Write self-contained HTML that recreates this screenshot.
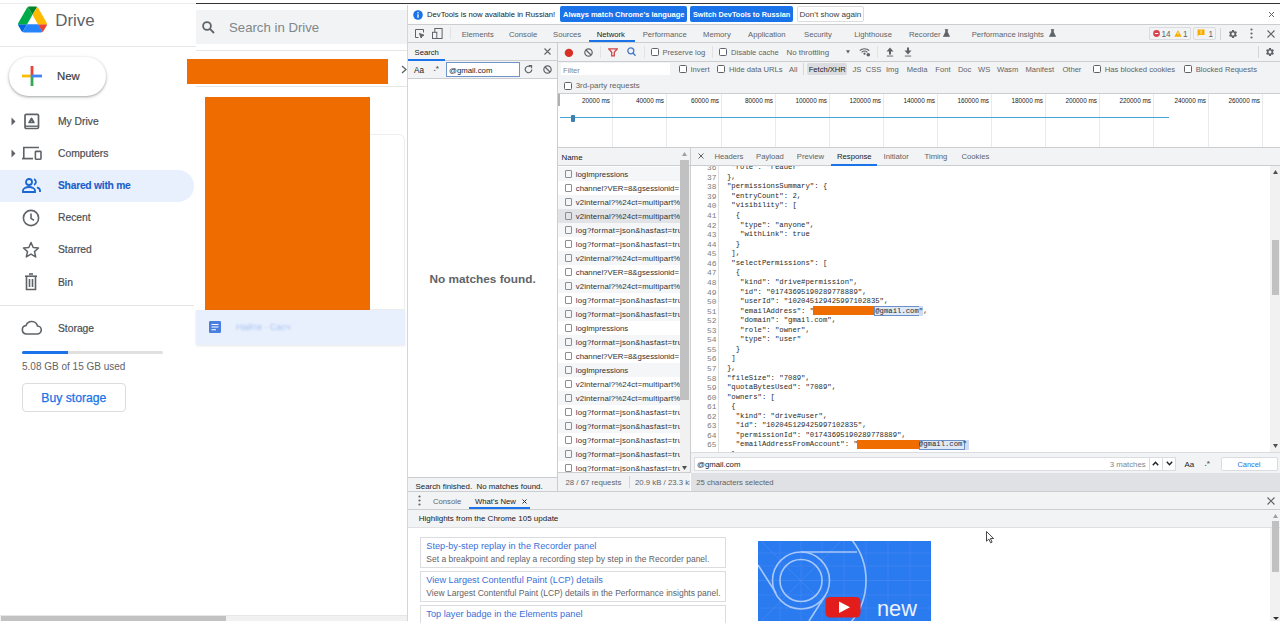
<!DOCTYPE html>
<html><head><meta charset="utf-8">
<style>
*{box-sizing:border-box}
html,body{margin:0;padding:0}
body{width:1280px;height:623px;position:relative;overflow:hidden;background:#fff;font-family:"Liberation Sans",sans-serif;color:#202124}
.a{position:absolute}
.t{position:absolute;white-space:pre;line-height:1}
.dt{font-size:7.7px;color:#5f6368}
.mono{font-family:"Liberation Mono",monospace}
</style></head><body>

<!-- ============ DRIVE SIDEBAR ============ -->
<div class="a" style="left:0;top:3px;width:196px;height:1px;background:#ececec"></div>
<svg class="a" style="left:18px;top:6px" width="29" height="27" viewBox="0 0 87.3 78">
<path d="m6.6 66.85 3.85 6.65c.8 1.4 1.95 2.5 3.3 3.3l13.75-23.8h-27.5c0 1.55.4 3.1 1.2 4.5z" fill="#0066da"/>
<path d="m43.65 25-13.75-23.8c-1.35.8-2.5 1.9-3.3 3.3l-25.4 44a9.06 9.06 0 0 0 -1.2 4.5h27.5z" fill="#00ac47"/>
<path d="m73.55 76.8c1.35-.8 2.5-1.9 3.3-3.3l1.6-2.75 7.65-13.25c.8-1.4 1.2-2.95 1.2-4.5h-27.502l5.852 11.5z" fill="#ea4335"/>
<path d="m43.65 25 13.75-23.8c-1.35-.8-2.9-1.2-4.5-1.2h-18.5c-1.6 0-3.15.45-4.5 1.2z" fill="#00832d"/>
<path d="m59.8 53h-32.3l-13.75 23.8c1.35.8 2.9 1.2 4.5 1.2h50.8c1.6 0 3.15-.45 4.5-1.2z" fill="#2684fc"/>
<path d="m73.4 26.5-12.7-22c-.8-1.4-1.95-2.5-3.3-3.3l-13.75 23.8 16.15 28h27.45c0-1.55-.4-3.1-1.2-4.5z" fill="#ffba00"/>
</svg>
<div class="t" style="left:55.3px;top:12.5px;font-size:16.9px;color:#5f6368">Drive</div>
<div class="a" style="left:0;top:46px;width:196px;height:1px;background:#e6e6e6"></div>

<!-- New button -->
<div class="a" style="left:9px;top:57px;width:97px;height:39px;border-radius:20px;background:#fff;box-shadow:0 1px 2px rgba(60,64,67,.30),0 1px 3px 1px rgba(60,64,67,.15)"></div>
<svg class="a" style="left:22px;top:66px" width="20" height="20" viewBox="0 0 20 20">
<rect x="8.6" y="0" width="2.8" height="9" fill="#ea4335"/>
<rect x="11" y="8.6" width="9" height="2.8" fill="#4285f4"/>
<rect x="8.6" y="11" width="2.8" height="9" fill="#34a853"/>
<rect x="0" y="8.6" width="9" height="2.8" fill="#fbbc04"/>
<rect x="8.6" y="8.6" width="2.8" height="2.8" fill="#4285f4"/>
</svg>
<div class="t" style="left:57px;top:71.3px;font-size:11.4px;color:#3c4043;-webkit-text-stroke:0.2px #3c4043">New</div>

<!-- nav -->
<div class="a" style="left:0;top:170px;width:194px;height:32px;background:#e8f0fe;border-radius:0 16px 16px 0"></div>

<svg class="a" style="left:11px;top:117px" width="5" height="9" viewBox="0 0 5 9"><path d="M0.5 0.5 L4.5 4.5 L0.5 8.5Z" fill="#5f6368"/></svg>
<svg class="a" style="left:23px;top:113px" width="17" height="17" viewBox="0 0 17 17" fill="none" stroke="#5f6368" stroke-width="1.7"><rect x="2" y="1.3" width="13.5" height="14.2" rx="1.3"/><path d="M2 13.2h13.5" stroke-width="1.4"/><path d="M8.5 5.6L6.2 9.4H10.8Z" stroke-width="1.9" stroke-linejoin="round"/></svg>
<div class="t" style="left:58px;top:117.2px;font-size:10.3px;color:#4a4e52;-webkit-text-stroke:0.2px #4a4e52">My Drive</div>

<svg class="a" style="left:11px;top:149px" width="5" height="9" viewBox="0 0 5 9"><path d="M0.5 0.5 L4.5 4.5 L0.5 8.5Z" fill="#5f6368"/></svg>
<svg class="a" style="left:21px;top:146px" width="21" height="16" viewBox="0 0 21 16" fill="none" stroke="#5f6368" stroke-width="1.6"><path d="M2.8 12.2V1.5H18"/><path d="M1 12.6h11" stroke-width="1.7"/><rect x="14.4" y="5.4" width="5.6" height="7.8" rx="0.6"/></svg>
<div class="t" style="left:58px;top:149.2px;font-size:10.3px;color:#4a4e52;-webkit-text-stroke:0.2px #4a4e52">Computers</div>

<svg class="a" style="left:22px;top:178px" width="19" height="15" viewBox="0 0 19 15" fill="none" stroke="#1967d2" stroke-width="1.8"><circle cx="7" cy="4" r="3"/><path d="M1 14v-1.5c0-2 3-3.5 6-3.5s6 1.5 6 3.5V14z"/><path d="M12 1.2a3 3 0 0 1 0 5.6"/><path d="M15 9.3c1.8.6 3 1.6 3 3.2V14"/></svg>
<div class="t" style="left:58px;top:181.2px;font-size:10.3px;font-weight:bold;letter-spacing:-0.25px;color:#1c5ec8;-webkit-text-stroke:0.1px #1c5ec8">Shared with me</div>

<svg class="a" style="left:22px;top:209px" width="18" height="18" viewBox="0 0 18 18" fill="none" stroke="#5f6368" stroke-width="1.6"><circle cx="9" cy="9" r="7.6"/><path d="M9 4.5V9.3l3 2"/></svg>
<div class="t" style="left:58px;top:213.2px;font-size:10.3px;color:#4a4e52;-webkit-text-stroke:0.2px #4a4e52">Recent</div>

<svg class="a" style="left:22px;top:241px" width="18" height="18" viewBox="0 0 18 18" fill="none" stroke="#5f6368" stroke-width="1.5" stroke-linejoin="round"><path d="M9 1.5l2.2 5 5.3.5-4 3.6 1.2 5.3L9 13.1l-4.7 2.8 1.2-5.3-4-3.6 5.3-.5z"/></svg>
<div class="t" style="left:58px;top:245.2px;font-size:10.3px;color:#4a4e52;-webkit-text-stroke:0.2px #4a4e52">Starred</div>

<svg class="a" style="left:24px;top:273px" width="14" height="18" viewBox="0 0 14 18" fill="none" stroke="#5f6368" stroke-width="1.6"><path d="M1 3.2h12"/><path d="M5 1h4"/><path d="M2.5 3.5v13h9v-13"/><path d="M5.5 6v8M8.5 6v8"/></svg>
<div class="t" style="left:58px;top:278.2px;font-size:10.3px;color:#4a4e52;-webkit-text-stroke:0.2px #4a4e52">Bin</div>

<svg class="a" style="left:21px;top:320px" width="21" height="15" viewBox="0 0 21 15" fill="none" stroke="#5f6368" stroke-width="1.6"><path d="M5 14h11a4 4 0 0 0 .5-8A6 6 0 0 0 5 5.5a4.3 4.3 0 0 0 0 8.5z"/></svg>
<div class="t" style="left:58px;top:324.2px;font-size:10.3px;color:#4a4e52;-webkit-text-stroke:0.2px #4a4e52">Storage</div>
<div class="a" style="left:22px;top:351px;width:141px;height:3px;background:#e0e0e0;border-radius:2px"></div>
<div class="a" style="left:22px;top:351px;width:46px;height:3px;background:#1a73e8;border-radius:2px 0 0 2px"></div>
<div class="t" style="left:22px;top:362.2px;font-size:10px;color:#5f6368">5.08 GB of 15 GB used</div>
<div class="a" style="left:22px;top:383px;width:104px;height:29px;border:1px solid #dadce0;border-radius:4px"></div>
<div class="t" style="left:41.3px;top:392px;font-size:12.2px;color:#1a73e8;-webkit-text-stroke:0.25px #1a73e8">Buy storage</div>


<!-- storage -->
<div class="a" style="left:0;top:305px;width:194px;height:1px;background:#e3e3e3"></div>

<!-- ============ DRIVE MAIN ============ -->
<div class="a" style="left:196px;top:2.6px;width:1084px;height:1.6px;background:#333"></div>
<div class="a" style="left:196px;top:10px;width:211px;height:33.6px;background:#f1f3f4"></div>
<div class="t" style="left:229px;top:21px;font-size:13.2px;color:#80868b">Search in Drive</div>
<div class="a" style="left:196px;top:50px;width:211px;height:1px;background:#e6e6e6"></div>
<div class="a" style="left:187px;top:59px;width:201px;height:25px;background:#ef6c00"></div>
<div class="a" style="left:196px;top:86px;width:211px;height:1px;background:#e6e6e6"></div>
<div class="a" style="left:205px;top:134px;width:200px;height:176px;border:1px solid #eceef0;border-left:none;border-radius:0 6px 0 0"></div>
<div class="a" style="left:205px;top:97px;width:165px;height:213px;background:#ef6c00"></div>
<div class="a" style="left:196px;top:310px;width:209px;height:35px;background:#e9f0fd;box-shadow:0 1px 2px rgba(60,64,67,.12)"></div>

<!-- ============ DEVTOOLS ============ -->

<svg class="a" style="left:202px;top:21px" width="13" height="13" viewBox="0 0 13 13" fill="none" stroke="#5f6368" stroke-width="1.8"><circle cx="5" cy="5" r="3.9"/><path d="M7.9 7.9L12 12"/></svg>
<svg class="a" style="left:401px;top:65px" width="6" height="9" viewBox="0 0 6 9" fill="none" stroke="#5f6368" stroke-width="1.3"><path d="M1 1L5 4.5 1 8"/></svg>
<svg class="a" style="left:209px;top:321px" width="12" height="12" viewBox="0 0 12 12"><rect x="0" y="0" width="12" height="12" rx="1.2" fill="#4a7fe0"/><path d="M2.5 3.5h7M2.5 6h7M2.5 8.8h4.5" stroke="#fff" stroke-width="1.1"/></svg>
<div class="t" style="left:236px;top:323px;font-size:9px;color:#a8c3f0;filter:blur(1.3px)">Найти · Сасч</div>
<div class="a" style="left:0;top:615px;width:407px;height:6px;background:#f1f1f1;border-top:1px solid #e6e6e6"></div>
<div class="a" style="left:1px;top:616px;width:225px;height:5px;background:#c2c2c2"></div>
<div class="a" style="left:407px;top:5px;width:1px;height:616px;background:#d3d5d8;"></div>
<div class="a" style="left:408px;top:5px;width:872px;height:19px;background:#fff;"></div>
<div class="a" style="left:408px;top:24px;width:872px;height:1px;background:#cbcdd1;"></div>
<svg class="a" style="left:413px;top:10px" width="10" height="10" viewBox="0 0 10 10"><circle cx="5" cy="5" r="4.8" fill="#1a73e8"/><rect x="4.35" y="4.2" width="1.3" height="3.6" fill="#fff"/><rect x="4.35" y="2.1" width="1.3" height="1.3" fill="#fff"/></svg>
<div class="t" style="left:427px;top:11.30px;font-size:7.7px;color:#202124;">DevTools is now available in Russian!</div>
<div class="a" style="left:560px;top:6px;width:127px;height:16px;background:#1a73e8;border-radius:2px"></div>
<div class="t" style="left:563px;top:10.80px;font-size:7.5px;color:#fff;font-weight:bold">Always match Chrome's language</div>
<div class="a" style="left:690px;top:6px;width:103px;height:16px;background:#1a73e8;border-radius:2px"></div>
<div class="t" style="left:693px;top:10.80px;font-size:7.3px;color:#fff;font-weight:bold">Switch DevTools to Russian</div>
<div class="a" style="left:797px;top:6px;width:67px;height:16px;background:#fff;border:1px solid #dadce0;border-radius:2px"></div>
<div class="t" style="left:799.5px;top:10.80px;font-size:8.1px;color:#3c4043;">Don't show again</div>
<svg class="a" style="left:1268px;top:11px" width="7" height="7" viewBox="0 0 7 7" stroke="#5f6368" stroke-width="1"><path d="M1 1L6 6M6 1L1 6"/></svg>
<div class="a" style="left:408px;top:25px;width:872px;height:17px;background:#f1f3f4;"></div>
<div class="a" style="left:408px;top:42px;width:872px;height:1px;background:#cbcdd1;"></div>
<svg class="a" style="left:414px;top:28px" width="11" height="11" viewBox="0 0 11 11" fill="none" stroke="#5f6368" stroke-width="1"><path d="M4.5 9.5H1.5V1.5H9.5V4.5"/><path d="M5.5 5.5L10 7.2 8 8 7.2 10z" fill="#5f6368"/></svg>
<svg class="a" style="left:432px;top:28px" width="11" height="11" viewBox="0 0 11 11" fill="none" stroke="#5f6368" stroke-width="1"><rect x="2.8" y="0.5" width="7.3" height="10"/><rect x="0.5" y="4.3" width="4.3" height="6.2" fill="#f1f3f4"/></svg>
<div class="a" style="left:450px;top:27px;width:1px;height:12px;background:#e0e2e5;"></div>
<div class="t" style="left:461.7px;top:30.80px;font-size:7.7px;color:#5f6368;">Elements</div>
<div class="t" style="left:509px;top:30.80px;font-size:7.7px;color:#5f6368;">Console</div>
<div class="t" style="left:553px;top:30.80px;font-size:7.7px;color:#5f6368;">Sources</div>
<div class="t" style="left:596.7px;top:30.80px;font-size:7.7px;color:#202124;">Network</div>
<div class="t" style="left:642.7px;top:30.80px;font-size:7.7px;color:#5f6368;">Performance</div>
<div class="t" style="left:703px;top:30.80px;font-size:7.7px;color:#5f6368;">Memory</div>
<div class="t" style="left:748px;top:30.80px;font-size:7.7px;color:#5f6368;">Application</div>
<div class="t" style="left:804px;top:30.80px;font-size:7.7px;color:#5f6368;">Security</div>
<div class="t" style="left:854.3px;top:30.80px;font-size:7.7px;color:#5f6368;">Lighthouse</div>
<div class="t" style="left:909px;top:30.80px;font-size:7.7px;color:#5f6368;">Recorder</div>
<div class="t" style="left:971.7px;top:30.80px;font-size:7.7px;color:#5f6368;">Performance insights</div>
<div class="a" style="left:589px;top:40px;width:46px;height:2px;background:#1a73e8;"></div>
<svg class="a" style="left:943px;top:29px" width="7" height="8" viewBox="0 0 7 8"><path d="M1.8 0.4h3.4M2.6 0.4v2.6L0.4 7.6h6.2L4.4 3V0.4" fill="#5f6368" stroke="#5f6368" stroke-width="0.7"/></svg>
<svg class="a" style="left:1049px;top:29px" width="7" height="8" viewBox="0 0 7 8"><path d="M1.8 0.4h3.4M2.6 0.4v2.6L0.4 7.6h6.2L4.4 3V0.4" fill="#5f6368" stroke="#5f6368" stroke-width="0.7"/></svg>
<div class="a" style="left:1148.5px;top:27px;width:42px;height:13px;background:#f1f3f4;border:1px solid #dadce0;border-radius:1px"></div>
<svg class="a" style="left:1153px;top:30px" width="7" height="7" viewBox="0 0 7 7"><circle cx="3.5" cy="3.5" r="3.4" fill="#d8454f"/><path d="M1.8 3.5H5.2" stroke="#fff" stroke-width="1"/></svg>
<div class="t" style="left:1161.5px;top:30.80px;font-size:8.2px;color:#5f6368;">14</div>
<svg class="a" style="left:1173.5px;top:29.5px" width="8" height="7" viewBox="0 0 8 7"><path d="M4 0.3L7.7 6.7H0.3z" fill="#f9ab00"/><rect x="3.6" y="2.3" width="0.8" height="2.3" fill="#fff"/></svg>
<div class="t" style="left:1183px;top:30.80px;font-size:8.2px;color:#5f6368;">1</div>
<div class="a" style="left:1193px;top:27px;width:23px;height:13px;background:#f1f3f4;border:1px solid #dadce0;border-radius:2px"></div>
<svg class="a" style="left:1197px;top:29px" width="8" height="8" viewBox="0 0 8 8"><path d="M0.5 0.5h7v5.5H2L0.5 7.5z" fill="#f9ab00"/><rect x="3.6" y="1.5" width="0.9" height="2.3" fill="#fff"/><rect x="3.6" y="4.3" width="0.9" height="0.9" fill="#fff"/></svg>
<div class="t" style="left:1208.5px;top:30.80px;font-size:8.2px;color:#5f6368;">1</div>
<div class="a" style="left:1220px;top:28px;width:1px;height:12px;background:#d4d6d9;"></div>
<svg class="a" style="left:1227.5px;top:28.5px" width="10" height="10" viewBox="0 0 24 24"><path fill="#5f6368" d="M19.14 12.94c.04-.3.06-.61.06-.94 0-.32-.02-.64-.07-.94l2.03-1.58c.18-.14.23-.41.12-.61l-1.92-3.32c-.12-.22-.37-.29-.59-.22l-2.39.96c-.5-.38-1.03-.7-1.62-.94l-.36-2.54c-.04-.24-.24-.41-.48-.41h-3.84c-.24 0-.43.17-.47.41l-.36 2.54c-.59.24-1.13.57-1.62.94l-2.39-.96c-.22-.08-.47 0-.59.22L2.74 8.87c-.12.21-.08.47.12.61l2.03 1.58c-.05.3-.09.63-.09.94s.02.64.07.94l-2.03 1.58c-.18.14-.23.41-.12.61l1.92 3.32c.12.22.37.29.59.22l2.39-.96c.5.38 1.03.7 1.62.94l.36 2.54c.05.24.24.41.48.41h3.84c.24 0 .44-.17.47-.41l.36-2.54c.59-.24 1.13-.56 1.62-.94l2.39.96c.22.08.47 0 .59-.22l1.92-3.32c.12-.22.07-.47-.12-.61l-2.01-1.58zM12 15.6c-1.98 0-3.6-1.62-3.6-3.6s1.62-3.6 3.6-3.6 3.6 1.62 3.6 3.6-1.62 3.6-3.6 3.6z"/></svg>
<svg class="a" style="left:1250px;top:28px" width="3" height="11" viewBox="0 0 3 11" fill="#5f6368"><circle cx="1.5" cy="1.5" r="1.1"/><circle cx="1.5" cy="5.5" r="1.1"/><circle cx="1.5" cy="9.5" r="1.1"/></svg>
<svg class="a" style="left:1266.5px;top:30px" width="8" height="8" viewBox="0 0 8 8" stroke="#5f6368" stroke-width="1.1"><path d="M0.5 0.5L7.5 7.5M7.5 0.5L0.5 7.5"/></svg>
<div class="a" style="left:408px;top:43px;width:149px;height:17px;background:#f1f3f4;"></div>
<div class="a" style="left:408px;top:60px;width:149px;height:1px;background:#cbcdd1;"></div>
<div class="t" style="left:414.5px;top:49.30px;font-size:7.7px;color:#202124;">Search</div>
<div class="a" style="left:408px;top:59px;width:37px;height:2px;background:#1a73e8;"></div>
<svg class="a" style="left:543.5px;top:48px" width="7" height="7" viewBox="0 0 7 7" stroke="#5f6368" stroke-width="1.1"><path d="M0.5 0.5L6.5 6.5M6.5 0.5L0.5 6.5"/></svg>
<div class="a" style="left:408px;top:61px;width:149px;height:17px;background:#f1f3f4;"></div>
<div class="a" style="left:408px;top:78px;width:149px;height:1px;background:#cbcdd1;"></div>
<div class="t" style="left:414px;top:67.30px;font-size:8.2px;color:#202124;">Aa</div>
<div class="t" style="left:433.5px;top:64.80px;font-size:8px;color:#5f6368;font-weight:bold">.*</div>
<div class="a" style="left:446px;top:62px;width:74px;height:15px;background:#fff;border:1px solid #6f94cc"></div>
<div class="t" style="left:449px;top:66.80px;font-size:7.8px;color:#202124;">@gmail.com</div>
<svg class="a" style="left:524px;top:65px" width="9" height="9" viewBox="0 0 9 9" fill="none" stroke="#5f6368" stroke-width="1.2"><path d="M7.8 4.5A3.3 3.3 0 1 1 6.5 1.8"/><path d="M5 0.6h2.6v2.6" stroke-width="1.1"/></svg>
<svg class="a" style="left:542.5px;top:65px" width="9" height="9" viewBox="0 0 9 9" fill="none" stroke="#5f6368" stroke-width="1.2"><circle cx="4.5" cy="4.5" r="3.7"/><path d="M2 2L7 7"/></svg>
<div class="t" style="left:429.5px;top:274.30px;font-size:11.8px;color:#5f6368;font-weight:bold">No matches found.</div>
<div class="a" style="left:408px;top:477px;width:149px;height:1px;background:#cbcdd1;"></div>
<div class="a" style="left:408px;top:478px;width:149px;height:13px;background:#f1f3f4;"></div>
<div class="t" style="left:415.5px;top:482.80px;font-size:7.9px;color:#202124;">Search finished.  No matches found.</div>
<div class="a" style="left:557px;top:43px;width:1px;height:448px;background:#cbcdd1;"></div>
<div class="a" style="left:558px;top:43px;width:722px;height:18px;background:#f1f3f4;"></div>
<div class="a" style="left:558px;top:61px;width:722px;height:1px;background:#cbcdd1;"></div>
<svg class="a" style="left:564px;top:47.5px" width="10" height="10" viewBox="0 0 10 10"><circle cx="4.9" cy="4.9" r="4.2" fill="#d93025"/></svg>
<svg class="a" style="left:583.5px;top:47.5px" width="9" height="9" viewBox="0 0 9 9" fill="none" stroke="#5f6368" stroke-width="1.2"><circle cx="4.5" cy="4.5" r="3.7"/><path d="M2 2L7 7"/></svg>
<div class="a" style="left:600px;top:46px;width:1px;height:12px;background:#e0e2e5;"></div>
<svg class="a" style="left:607.5px;top:47.5px" width="10" height="9" viewBox="0 0 10 9" fill="none" stroke="#d0454a" stroke-width="1.3"><path d="M0.8 0.9h8.4L6.3 4.2V7.8H3.7V4.2z"/></svg>
<svg class="a" style="left:626.5px;top:47px" width="9" height="10" viewBox="0 0 9 10" fill="none" stroke="#4a78c6" stroke-width="1.3"><circle cx="3.8" cy="3.8" r="3"/><path d="M6 6L8.5 8.8"/></svg>
<div class="a" style="left:643.5px;top:46px;width:1px;height:12px;background:#e0e2e5;"></div>
<div class="a" style="left:650.5px;top:48px;width:8px;height:8px;border:1px solid #5f6368;border-radius:1.5px;background:#fff"></div>
<div class="t" style="left:662.5px;top:48.80px;font-size:7.6px;color:#5f6368;">Preserve log</div>
<div class="a" style="left:712px;top:46px;width:1px;height:12px;background:#e0e2e5;"></div>
<div class="a" style="left:719px;top:48px;width:8px;height:8px;border:1px solid #5f6368;border-radius:1.5px;background:#fff"></div>
<div class="t" style="left:731px;top:48.80px;font-size:7.6px;color:#5f6368;">Disable cache</div>
<div class="t" style="left:786.5px;top:48.80px;font-size:7.9px;color:#5f6368;">No throttling</div>
<svg class="a" style="left:845.5px;top:50px" width="4" height="4" viewBox="0 0 4 4"><path d="M0 0.3h4L2 3.6z" fill="#5f6368"/></svg>
<svg class="a" style="left:859px;top:47px" width="12" height="10" viewBox="0 0 12 10" fill="none" stroke="#5f6368" stroke-width="1.1"><path d="M0.8 3.5a7 7 0 0 1 9.4 0"/><path d="M2.6 5.3a4.3 4.3 0 0 1 5.8 0"/><circle cx="5.5" cy="6.7" r="0.55" fill="#5f6368"/><circle cx="9.3" cy="7.8" r="1.8" fill="#5f6368" stroke="none"/></svg>
<div class="a" style="left:876.5px;top:46px;width:1px;height:12px;background:#e0e2e5;"></div>
<svg class="a" style="left:885.5px;top:46.5px" width="8" height="10" viewBox="0 0 8 10" fill="#5f6368"><path d="M4 0.5L7.5 4.5H5v3H3v-3H0.5z"/><rect x="0.8" y="8.6" width="6.4" height="0.9"/></svg>
<svg class="a" style="left:904px;top:46.5px" width="8" height="10" viewBox="0 0 8 10" fill="#5f6368"><path d="M4 7.5L7.5 3.5H5v-3H3v3H0.5z"/><rect x="0.8" y="8.6" width="6.4" height="0.9"/></svg>
<div class="a" style="left:1257.5px;top:46px;width:1px;height:12px;background:#d4d6d9;"></div>
<svg class="a" style="left:1265px;top:47px" width="10" height="10" viewBox="0 0 24 24"><path fill="#5f6368" d="M19.14 12.94c.04-.3.06-.61.06-.94 0-.32-.02-.64-.07-.94l2.03-1.58c.18-.14.23-.41.12-.61l-1.92-3.32c-.12-.22-.37-.29-.59-.22l-2.39.96c-.5-.38-1.03-.7-1.62-.94l-.36-2.54c-.04-.24-.24-.41-.48-.41h-3.84c-.24 0-.43.17-.47.41l-.36 2.54c-.59.24-1.13.57-1.62.94l-2.39-.96c-.22-.08-.47 0-.59.22L2.74 8.87c-.12.21-.08.47.12.61l2.03 1.58c-.05.3-.09.63-.09.94s.02.64.07.94l-2.03 1.58c-.18.14-.23.41-.12.61l1.92 3.32c.12.22.37.29.59.22l2.39-.96c.5.38 1.03.7 1.62.94l.36 2.54c.05.24.24.41.48.41h3.84c.24 0 .44-.17.47-.41l.36-2.54c.59-.24 1.13-.56 1.62-.94l2.39.96c.22.08.47 0 .59-.22l1.92-3.32c.12-.22.07-.47-.12-.61l-2.01-1.58zM12 15.6c-1.98 0-3.6-1.62-3.6-3.6s1.62-3.6 3.6-3.6 3.6 1.62 3.6 3.6-1.62 3.6-3.6 3.6z"/></svg>
<div class="a" style="left:558px;top:62px;width:722px;height:16px;background:#f1f3f4;"></div>
<div class="a" style="left:561px;top:62.5px;width:109px;height:12.5px;background:#fff;"></div>
<div class="t" style="left:563px;top:67.10px;font-size:7.6px;color:#80868b;">Filter</div>
<div class="a" style="left:678.5px;top:65px;width:8px;height:8px;border:1px solid #5f6368;border-radius:1.5px;background:#fff"></div>
<div class="t" style="left:690.5px;top:66.30px;font-size:7.6px;color:#5f6368;">Invert</div>
<div class="a" style="left:717px;top:65px;width:8px;height:8px;border:1px solid #5f6368;border-radius:1.5px;background:#fff"></div>
<div class="t" style="left:729px;top:66.30px;font-size:7.6px;color:#5f6368;">Hide data URLs</div>
<div class="t" style="left:789px;top:66.30px;font-size:7.6px;color:#5f6368;">All</div>
<div class="a" style="left:802.5px;top:63px;width:1px;height:12px;background:#d4d6d9;"></div>
<div class="a" style="left:806.5px;top:63px;width:40.5px;height:12px;background:#dadce0;border-radius:2px"></div>
<div class="t" style="left:808.7px;top:66.30px;font-size:7.6px;color:#202124;">Fetch/XHR</div>
<div class="t" style="left:852.4px;top:66.30px;font-size:7.6px;color:#5f6368;">JS</div>
<div class="t" style="left:865.7px;top:66.30px;font-size:7.6px;color:#5f6368;">CSS</div>
<div class="t" style="left:886px;top:66.30px;font-size:7.6px;color:#5f6368;">Img</div>
<div class="t" style="left:906.8px;top:66.30px;font-size:7.6px;color:#5f6368;">Media</div>
<div class="t" style="left:935.3px;top:66.30px;font-size:7.6px;color:#5f6368;">Font</div>
<div class="t" style="left:957.9px;top:66.30px;font-size:7.6px;color:#5f6368;">Doc</div>
<div class="t" style="left:978px;top:66.30px;font-size:7.6px;color:#5f6368;">WS</div>
<div class="t" style="left:997px;top:66.30px;font-size:7.6px;color:#5f6368;">Wasm</div>
<div class="t" style="left:1025.4px;top:66.30px;font-size:7.6px;color:#5f6368;">Manifest</div>
<div class="t" style="left:1062.4px;top:66.30px;font-size:7.6px;color:#5f6368;">Other</div>
<div class="a" style="left:1092.5px;top:65px;width:8px;height:8px;border:1px solid #5f6368;border-radius:1.5px;background:#fff"></div>
<div class="t" style="left:1104.7px;top:66.30px;font-size:7.7px;color:#5f6368;">Has blocked cookies</div>
<div class="a" style="left:1183.5px;top:65px;width:8px;height:8px;border:1px solid #5f6368;border-radius:1.5px;background:#fff"></div>
<div class="t" style="left:1195.8px;top:66.30px;font-size:7.6px;color:#5f6368;">Blocked Requests</div>
<div class="a" style="left:558px;top:78px;width:722px;height:15px;background:#f1f3f4;"></div>
<div class="a" style="left:558px;top:93px;width:722px;height:1px;background:#cbcdd1;"></div>
<div class="a" style="left:563.5px;top:81.5px;width:8px;height:8px;border:1px solid #5f6368;border-radius:1.5px;background:#fff"></div>
<div class="t" style="left:575.7px;top:81.80px;font-size:7.9px;color:#5f6368;">3rd-party requests</div>
<div class="a" style="left:558px;top:94px;width:722px;height:53px;background:#fff;"></div>
<div class="a" style="left:612px;top:94px;width:1px;height:53px;background:#e8eaed;"></div>
<div class="t" style="left:552px;top:97.5px;width:58px;text-align:right;font-size:6.4px;color:#202124">20000 ms</div>
<div class="a" style="left:666px;top:94px;width:1px;height:53px;background:#e8eaed;"></div>
<div class="t" style="left:606px;top:97.5px;width:58px;text-align:right;font-size:6.4px;color:#202124">40000 ms</div>
<div class="a" style="left:721px;top:94px;width:1px;height:53px;background:#e8eaed;"></div>
<div class="t" style="left:661px;top:97.5px;width:58px;text-align:right;font-size:6.4px;color:#202124">60000 ms</div>
<div class="a" style="left:775px;top:94px;width:1px;height:53px;background:#e8eaed;"></div>
<div class="t" style="left:715px;top:97.5px;width:58px;text-align:right;font-size:6.4px;color:#202124">80000 ms</div>
<div class="a" style="left:829px;top:94px;width:1px;height:53px;background:#e8eaed;"></div>
<div class="t" style="left:769px;top:97.5px;width:58px;text-align:right;font-size:6.4px;color:#202124">100000 ms</div>
<div class="a" style="left:883px;top:94px;width:1px;height:53px;background:#e8eaed;"></div>
<div class="t" style="left:823px;top:97.5px;width:58px;text-align:right;font-size:6.4px;color:#202124">120000 ms</div>
<div class="a" style="left:937px;top:94px;width:1px;height:53px;background:#e8eaed;"></div>
<div class="t" style="left:877px;top:97.5px;width:58px;text-align:right;font-size:6.4px;color:#202124">140000 ms</div>
<div class="a" style="left:991px;top:94px;width:1px;height:53px;background:#e8eaed;"></div>
<div class="t" style="left:931px;top:97.5px;width:58px;text-align:right;font-size:6.4px;color:#202124">160000 ms</div>
<div class="a" style="left:1045px;top:94px;width:1px;height:53px;background:#e8eaed;"></div>
<div class="t" style="left:985px;top:97.5px;width:58px;text-align:right;font-size:6.4px;color:#202124">180000 ms</div>
<div class="a" style="left:1099px;top:94px;width:1px;height:53px;background:#e8eaed;"></div>
<div class="t" style="left:1039px;top:97.5px;width:58px;text-align:right;font-size:6.4px;color:#202124">200000 ms</div>
<div class="a" style="left:1153px;top:94px;width:1px;height:53px;background:#e8eaed;"></div>
<div class="t" style="left:1093px;top:97.5px;width:58px;text-align:right;font-size:6.4px;color:#202124">220000 ms</div>
<div class="a" style="left:1208px;top:94px;width:1px;height:53px;background:#e8eaed;"></div>
<div class="t" style="left:1148px;top:97.5px;width:58px;text-align:right;font-size:6.4px;color:#202124">240000 ms</div>
<div class="a" style="left:1262px;top:94px;width:1px;height:53px;background:#e8eaed;"></div>
<div class="t" style="left:1202px;top:97.5px;width:58px;text-align:right;font-size:6.4px;color:#202124">260000 ms</div>
<div class="a" style="left:558px;top:94px;width:2px;height:12px;background:#b0b0b0;"></div>
<div class="a" style="left:560px;top:116.7px;width:609px;height:1.6px;background:#4ba6d8;"></div>
<div class="a" style="left:571px;top:115px;width:4px;height:6.5px;background:#3d7fb0;border-radius:1px"></div>
<div class="a" style="left:558px;top:147px;width:722px;height:1px;background:#cbcdd1;"></div>

<div class="a" style="left:558px;top:148px;width:132px;height:17px;background:#f1f3f4;"></div>
<div class="a" style="left:558px;top:165px;width:132px;height:1px;background:#cbcdd1;"></div>
<div class="t" style="left:561.5px;top:153.80px;font-size:7.9px;color:#202124;">Name</div>
<div class="a" style="left:558px;top:166px;width:122px;height:307px;overflow:hidden">
<div class="a" style="left:0;top:1.0px;width:122px;height:14px;background:#f5f6f7"></div>
<div class="a" style="left:6.5px;top:4.0px;width:7.5px;height:7.5px;border:1px solid #8a8d91;border-radius:1px;background:#f5f6f7"></div>
<div class="t" style="left:17.8px;top:5.10px;font-size:7.8px;letter-spacing:0px;color:#303134">logImpressions</div>
<div class="a" style="left:0;top:15.0px;width:122px;height:14px;background:#fff"></div>
<div class="a" style="left:6.5px;top:18.0px;width:7.5px;height:7.5px;border:1px solid #8a8d91;border-radius:1px;background:#fff"></div>
<div class="t" style="left:17.8px;top:19.10px;font-size:7.8px;letter-spacing:0px;color:#303134">channel?VER=8&amp;gsessionid=</div>
<div class="a" style="left:0;top:29.0px;width:122px;height:14px;background:#f5f6f7"></div>
<div class="a" style="left:6.5px;top:32.0px;width:7.5px;height:7.5px;border:1px solid #8a8d91;border-radius:1px;background:#f5f6f7"></div>
<div class="t" style="left:17.8px;top:33.10px;font-size:7.8px;letter-spacing:0.12px;color:#303134">v2internal?%24ct=multipart%</div>
<div class="a" style="left:0;top:43.0px;width:122px;height:14px;background:#e1e3e6"></div>
<div class="a" style="left:6.5px;top:46.0px;width:7.5px;height:7.5px;border:1px solid #8a8d91;border-radius:1px;background:#e1e3e6"></div>
<div class="t" style="left:17.8px;top:47.10px;font-size:7.8px;letter-spacing:0.12px;color:#303134">v2internal?%24ct=multipart%</div>
<div class="a" style="left:0;top:57.0px;width:122px;height:14px;background:#f5f6f7"></div>
<div class="a" style="left:6.5px;top:60.0px;width:7.5px;height:7.5px;border:1px solid #8a8d91;border-radius:1px;background:#f5f6f7"></div>
<div class="t" style="left:17.8px;top:61.10px;font-size:7.8px;letter-spacing:0.25px;color:#303134">log?format=json&amp;hasfast=tru</div>
<div class="a" style="left:0;top:71.0px;width:122px;height:14px;background:#fff"></div>
<div class="a" style="left:6.5px;top:74.0px;width:7.5px;height:7.5px;border:1px solid #8a8d91;border-radius:1px;background:#fff"></div>
<div class="t" style="left:17.8px;top:75.10px;font-size:7.8px;letter-spacing:0.25px;color:#303134">log?format=json&amp;hasfast=tru</div>
<div class="a" style="left:0;top:85.0px;width:122px;height:14px;background:#f5f6f7"></div>
<div class="a" style="left:6.5px;top:88.0px;width:7.5px;height:7.5px;border:1px solid #8a8d91;border-radius:1px;background:#f5f6f7"></div>
<div class="t" style="left:17.8px;top:89.10px;font-size:7.8px;letter-spacing:0.12px;color:#303134">v2internal?%24ct=multipart%</div>
<div class="a" style="left:0;top:99.0px;width:122px;height:14px;background:#fff"></div>
<div class="a" style="left:6.5px;top:102.0px;width:7.5px;height:7.5px;border:1px solid #8a8d91;border-radius:1px;background:#fff"></div>
<div class="t" style="left:17.8px;top:103.10px;font-size:7.8px;letter-spacing:0px;color:#303134">channel?VER=8&amp;gsessionid=</div>
<div class="a" style="left:0;top:113.0px;width:122px;height:14px;background:#f5f6f7"></div>
<div class="a" style="left:6.5px;top:116.0px;width:7.5px;height:7.5px;border:1px solid #8a8d91;border-radius:1px;background:#f5f6f7"></div>
<div class="t" style="left:17.8px;top:117.10px;font-size:7.8px;letter-spacing:0.12px;color:#303134">v2internal?%24ct=multipart%</div>
<div class="a" style="left:0;top:127.0px;width:122px;height:14px;background:#fff"></div>
<div class="a" style="left:6.5px;top:130.0px;width:7.5px;height:7.5px;border:1px solid #8a8d91;border-radius:1px;background:#fff"></div>
<div class="t" style="left:17.8px;top:131.10px;font-size:7.8px;letter-spacing:0.25px;color:#303134">log?format=json&amp;hasfast=tru</div>
<div class="a" style="left:0;top:141.0px;width:122px;height:14px;background:#f5f6f7"></div>
<div class="a" style="left:6.5px;top:144.0px;width:7.5px;height:7.5px;border:1px solid #8a8d91;border-radius:1px;background:#f5f6f7"></div>
<div class="t" style="left:17.8px;top:145.10px;font-size:7.8px;letter-spacing:0.25px;color:#303134">log?format=json&amp;hasfast=tru</div>
<div class="a" style="left:0;top:155.0px;width:122px;height:14px;background:#fff"></div>
<div class="a" style="left:6.5px;top:158.0px;width:7.5px;height:7.5px;border:1px solid #8a8d91;border-radius:1px;background:#fff"></div>
<div class="t" style="left:17.8px;top:159.10px;font-size:7.8px;letter-spacing:0px;color:#303134">logImpressions</div>
<div class="a" style="left:0;top:169.0px;width:122px;height:14px;background:#f5f6f7"></div>
<div class="a" style="left:6.5px;top:172.0px;width:7.5px;height:7.5px;border:1px solid #8a8d91;border-radius:1px;background:#f5f6f7"></div>
<div class="t" style="left:17.8px;top:173.10px;font-size:7.8px;letter-spacing:0.25px;color:#303134">log?format=json&amp;hasfast=tru</div>
<div class="a" style="left:0;top:183.0px;width:122px;height:14px;background:#fff"></div>
<div class="a" style="left:6.5px;top:186.0px;width:7.5px;height:7.5px;border:1px solid #8a8d91;border-radius:1px;background:#fff"></div>
<div class="t" style="left:17.8px;top:187.10px;font-size:7.8px;letter-spacing:0px;color:#303134">channel?VER=8&amp;gsessionid=</div>
<div class="a" style="left:0;top:197.0px;width:122px;height:14px;background:#f5f6f7"></div>
<div class="a" style="left:6.5px;top:200.0px;width:7.5px;height:7.5px;border:1px solid #8a8d91;border-radius:1px;background:#f5f6f7"></div>
<div class="t" style="left:17.8px;top:201.10px;font-size:7.8px;letter-spacing:0px;color:#303134">logImpressions</div>
<div class="a" style="left:0;top:211.0px;width:122px;height:14px;background:#fff"></div>
<div class="a" style="left:6.5px;top:214.0px;width:7.5px;height:7.5px;border:1px solid #8a8d91;border-radius:1px;background:#fff"></div>
<div class="t" style="left:17.8px;top:215.10px;font-size:7.8px;letter-spacing:0.12px;color:#303134">v2internal?%24ct=multipart%</div>
<div class="a" style="left:0;top:225.0px;width:122px;height:14px;background:#f5f6f7"></div>
<div class="a" style="left:6.5px;top:228.0px;width:7.5px;height:7.5px;border:1px solid #8a8d91;border-radius:1px;background:#f5f6f7"></div>
<div class="t" style="left:17.8px;top:229.10px;font-size:7.8px;letter-spacing:0.12px;color:#303134">v2internal?%24ct=multipart%</div>
<div class="a" style="left:0;top:239.0px;width:122px;height:14px;background:#fff"></div>
<div class="a" style="left:6.5px;top:242.0px;width:7.5px;height:7.5px;border:1px solid #8a8d91;border-radius:1px;background:#fff"></div>
<div class="t" style="left:17.8px;top:243.10px;font-size:7.8px;letter-spacing:0.25px;color:#303134">log?format=json&amp;hasfast=tru</div>
<div class="a" style="left:0;top:253.0px;width:122px;height:14px;background:#f5f6f7"></div>
<div class="a" style="left:6.5px;top:256.0px;width:7.5px;height:7.5px;border:1px solid #8a8d91;border-radius:1px;background:#f5f6f7"></div>
<div class="t" style="left:17.8px;top:257.10px;font-size:7.8px;letter-spacing:0.25px;color:#303134">log?format=json&amp;hasfast=tru</div>
<div class="a" style="left:0;top:267.0px;width:122px;height:14px;background:#fff"></div>
<div class="a" style="left:6.5px;top:270.0px;width:7.5px;height:7.5px;border:1px solid #8a8d91;border-radius:1px;background:#fff"></div>
<div class="t" style="left:17.8px;top:271.10px;font-size:7.8px;letter-spacing:0.25px;color:#303134">log?format=json&amp;hasfast=tru</div>
<div class="a" style="left:0;top:281.0px;width:122px;height:14px;background:#f5f6f7"></div>
<div class="a" style="left:6.5px;top:284.0px;width:7.5px;height:7.5px;border:1px solid #8a8d91;border-radius:1px;background:#f5f6f7"></div>
<div class="t" style="left:17.8px;top:285.10px;font-size:7.8px;letter-spacing:0.25px;color:#303134">log?format=json&amp;hasfast=tru</div>
<div class="a" style="left:0;top:295.0px;width:122px;height:14px;background:#fff"></div>
<div class="a" style="left:6.5px;top:298.0px;width:7.5px;height:7.5px;border:1px solid #8a8d91;border-radius:1px;background:#fff"></div>
<div class="t" style="left:17.8px;top:299.10px;font-size:7.8px;letter-spacing:0.25px;color:#303134">log?format=json&amp;hasfast=tru</div>
</div>
<div class="a" style="left:680px;top:166px;width:10px;height:307px;background:#f1f1f1;"></div>
<div class="a" style="left:680px;top:160px;width:9px;height:240px;background:#c1c1c1;"></div>
<div class="a" style="left:680px;top:148px;width:10px;height:12px;background:#f1f3f4;"></div>
<svg class="a" style="left:682px;top:152px" width="5" height="4" viewBox="0 0 5 4"><path d="M0 4h5L2.5 0z" fill="#a0a0a0"/></svg>
<svg class="a" style="left:682px;top:466px" width="5" height="4" viewBox="0 0 5 4"><path d="M0 0h5L2.5 4z" fill="#505050"/></svg>
<div class="a" style="left:690px;top:148px;width:1px;height:325px;background:#cbcdd1;"></div>
<div class="a" style="left:558px;top:472px;width:132px;height:1px;background:#cbcdd1;"></div>
<div class="a" style="left:558px;top:473px;width:132px;height:18px;background:#f1f3f4;"></div>
<div class="t" style="left:565.5px;top:479.30px;font-size:7.8px;color:#5f6368;">28 / 67 requests</div>
<div class="a" style="left:628.5px;top:476px;width:1px;height:12px;background:#d4d6d9;"></div>
<div class="a" style="left:630px;top:473px;width:60px;height:18px;overflow:hidden"><div class="t" style="left:5px;top:5.5px;font-size:7.8px;color:#5f6368">20.9 kB / 23.3 kB</div></div>
<div class="a" style="left:691px;top:148px;width:589px;height:17px;background:#f1f3f4;"></div>
<div class="a" style="left:691px;top:165px;width:589px;height:1px;background:#cbcdd1;"></div>
<svg class="a" style="left:697.5px;top:153px" width="6" height="6" viewBox="0 0 6 6" stroke="#5f6368" stroke-width="1"><path d="M0.5 0.5L5.5 5.5M5.5 0.5L0.5 5.5"/></svg>
<div class="t" style="left:714.4px;top:152.80px;font-size:7.7px;color:#5f6368;">Headers</div>
<div class="t" style="left:756px;top:152.80px;font-size:7.7px;color:#5f6368;">Payload</div>
<div class="t" style="left:796.8px;top:152.80px;font-size:7.7px;color:#5f6368;">Preview</div>
<div class="t" style="left:837px;top:152.80px;font-size:7.7px;color:#202124;">Response</div>
<div class="t" style="left:883.6px;top:152.80px;font-size:7.7px;color:#5f6368;">Initiator</div>
<div class="t" style="left:924.6px;top:152.80px;font-size:7.7px;color:#5f6368;">Timing</div>
<div class="t" style="left:961.5px;top:152.80px;font-size:7.7px;color:#5f6368;">Cookies</div>
<div class="a" style="left:831px;top:163.5px;width:46px;height:2px;background:#1a73e8;"></div>
<div class="a" style="left:691px;top:166px;width:579px;height:286px;overflow:hidden;background:#fff">
<div class="a" style="left:0;top:0;width:28px;height:286px;background:#fff;border-right:1px solid #e0e0e0"></div>
<div class="a" style="left:183.39999999999998px;top:140.04px;width:45.5px;height:10px;border:1px solid #6b8fc9;background:#dfe8f5"></div>
<div class="a" style="left:227.5px;top:140.04px;width:4px;height:10px;background:#cfdcf2"></div>
<div class="a" style="left:227.70000000000005px;top:273.88px;width:46px;height:10px;border:1px solid #6b8fc9;background:#dfe8f5"></div>
<div class="a" style="left:273.5px;top:273.88px;width:4px;height:10px;background:#cfdcf2"></div>
<div class="t mono" style="left:0;top:-1.76px;width:25.5px;text-align:right;font-size:7.9px;color:#7d7d7d">36</div>
<div class="t mono" style="left:36px;top:-1.76px;font-size:7.28px;color:#2a2a2a"> "role": "reader"</div>
<div class="t mono" style="left:0;top:7.80px;width:25.5px;text-align:right;font-size:7.9px;color:#7d7d7d">37</div>
<div class="t mono" style="left:36px;top:7.80px;font-size:7.28px;color:#2a2a2a">},</div>
<div class="t mono" style="left:0;top:17.36px;width:25.5px;text-align:right;font-size:7.9px;color:#7d7d7d">38</div>
<div class="t mono" style="left:36px;top:17.36px;font-size:7.28px;color:#2a2a2a">"permissionsSummary": {</div>
<div class="t mono" style="left:0;top:26.92px;width:25.5px;text-align:right;font-size:7.9px;color:#7d7d7d">39</div>
<div class="t mono" style="left:36px;top:26.92px;font-size:7.28px;color:#2a2a2a"> "entryCount": 2,</div>
<div class="t mono" style="left:0;top:36.48px;width:25.5px;text-align:right;font-size:7.9px;color:#7d7d7d">40</div>
<div class="t mono" style="left:36px;top:36.48px;font-size:7.28px;color:#2a2a2a"> "visibility": [</div>
<div class="t mono" style="left:0;top:46.04px;width:25.5px;text-align:right;font-size:7.9px;color:#7d7d7d">41</div>
<div class="t mono" style="left:36px;top:46.04px;font-size:7.28px;color:#2a2a2a">  {</div>
<div class="t mono" style="left:0;top:55.60px;width:25.5px;text-align:right;font-size:7.9px;color:#7d7d7d">42</div>
<div class="t mono" style="left:36px;top:55.60px;font-size:7.28px;color:#2a2a2a">   "type": "anyone",</div>
<div class="t mono" style="left:0;top:65.16px;width:25.5px;text-align:right;font-size:7.9px;color:#7d7d7d">43</div>
<div class="t mono" style="left:36px;top:65.16px;font-size:7.28px;color:#2a2a2a">   "withLink": true</div>
<div class="t mono" style="left:0;top:74.72px;width:25.5px;text-align:right;font-size:7.9px;color:#7d7d7d">44</div>
<div class="t mono" style="left:36px;top:74.72px;font-size:7.28px;color:#2a2a2a">  }</div>
<div class="t mono" style="left:0;top:84.28px;width:25.5px;text-align:right;font-size:7.9px;color:#7d7d7d">45</div>
<div class="t mono" style="left:36px;top:84.28px;font-size:7.28px;color:#2a2a2a"> ],</div>
<div class="t mono" style="left:0;top:93.84px;width:25.5px;text-align:right;font-size:7.9px;color:#7d7d7d">46</div>
<div class="t mono" style="left:36px;top:93.84px;font-size:7.28px;color:#2a2a2a"> "selectPermissions": [</div>
<div class="t mono" style="left:0;top:103.40px;width:25.5px;text-align:right;font-size:7.9px;color:#7d7d7d">47</div>
<div class="t mono" style="left:36px;top:103.40px;font-size:7.28px;color:#2a2a2a">  {</div>
<div class="t mono" style="left:0;top:112.96px;width:25.5px;text-align:right;font-size:7.9px;color:#7d7d7d">48</div>
<div class="t mono" style="left:36px;top:112.96px;font-size:7.28px;color:#2a2a2a">   "kind": "drive#permission",</div>
<div class="t mono" style="left:0;top:122.52px;width:25.5px;text-align:right;font-size:7.9px;color:#7d7d7d">49</div>
<div class="t mono" style="left:36px;top:122.52px;font-size:7.28px;color:#2a2a2a">   "id": "01743695190289778889",</div>
<div class="t mono" style="left:0;top:132.08px;width:25.5px;text-align:right;font-size:7.9px;color:#7d7d7d">50</div>
<div class="t mono" style="left:36px;top:132.08px;font-size:7.28px;color:#2a2a2a">   "userId": "102045129425997102835",</div>
<div class="t mono" style="left:0;top:141.64px;width:25.5px;text-align:right;font-size:7.9px;color:#7d7d7d">51</div>
<div class="t mono" style="left:36px;top:141.64px;font-size:7.28px;color:#2a2a2a">   "emailAddress": "              @gmail.com",</div>
<div class="t mono" style="left:0;top:151.20px;width:25.5px;text-align:right;font-size:7.9px;color:#7d7d7d">52</div>
<div class="t mono" style="left:36px;top:151.20px;font-size:7.28px;color:#2a2a2a">   "domain": "gmail.com",</div>
<div class="t mono" style="left:0;top:160.76px;width:25.5px;text-align:right;font-size:7.9px;color:#7d7d7d">53</div>
<div class="t mono" style="left:36px;top:160.76px;font-size:7.28px;color:#2a2a2a">   "role": "owner",</div>
<div class="t mono" style="left:0;top:170.32px;width:25.5px;text-align:right;font-size:7.9px;color:#7d7d7d">54</div>
<div class="t mono" style="left:36px;top:170.32px;font-size:7.28px;color:#2a2a2a">   "type": "user"</div>
<div class="t mono" style="left:0;top:179.88px;width:25.5px;text-align:right;font-size:7.9px;color:#7d7d7d">55</div>
<div class="t mono" style="left:36px;top:179.88px;font-size:7.28px;color:#2a2a2a">  }</div>
<div class="t mono" style="left:0;top:189.44px;width:25.5px;text-align:right;font-size:7.9px;color:#7d7d7d">56</div>
<div class="t mono" style="left:36px;top:189.44px;font-size:7.28px;color:#2a2a2a"> ]</div>
<div class="t mono" style="left:0;top:199.00px;width:25.5px;text-align:right;font-size:7.9px;color:#7d7d7d">57</div>
<div class="t mono" style="left:36px;top:199.00px;font-size:7.28px;color:#2a2a2a">},</div>
<div class="t mono" style="left:0;top:208.56px;width:25.5px;text-align:right;font-size:7.9px;color:#7d7d7d">58</div>
<div class="t mono" style="left:36px;top:208.56px;font-size:7.28px;color:#2a2a2a">"fileSize": "7089",</div>
<div class="t mono" style="left:0;top:218.12px;width:25.5px;text-align:right;font-size:7.9px;color:#7d7d7d">59</div>
<div class="t mono" style="left:36px;top:218.12px;font-size:7.28px;color:#2a2a2a">"quotaBytesUsed": "7089",</div>
<div class="t mono" style="left:0;top:227.68px;width:25.5px;text-align:right;font-size:7.9px;color:#7d7d7d">60</div>
<div class="t mono" style="left:36px;top:227.68px;font-size:7.28px;color:#2a2a2a">"owners": [</div>
<div class="t mono" style="left:0;top:237.24px;width:25.5px;text-align:right;font-size:7.9px;color:#7d7d7d">61</div>
<div class="t mono" style="left:36px;top:237.24px;font-size:7.28px;color:#2a2a2a"> {</div>
<div class="t mono" style="left:0;top:246.80px;width:25.5px;text-align:right;font-size:7.9px;color:#7d7d7d">62</div>
<div class="t mono" style="left:36px;top:246.80px;font-size:7.28px;color:#2a2a2a">  "kind": "drive#user",</div>
<div class="t mono" style="left:0;top:256.36px;width:25.5px;text-align:right;font-size:7.9px;color:#7d7d7d">63</div>
<div class="t mono" style="left:36px;top:256.36px;font-size:7.28px;color:#2a2a2a">  "id": "102045129425997102835",</div>
<div class="t mono" style="left:0;top:265.92px;width:25.5px;text-align:right;font-size:7.9px;color:#7d7d7d">64</div>
<div class="t mono" style="left:36px;top:265.92px;font-size:7.28px;color:#2a2a2a">  "permissionId": "01743695190289778889",</div>
<div class="t mono" style="left:0;top:275.48px;width:25.5px;text-align:right;font-size:7.9px;color:#7d7d7d">65</div>
<div class="t mono" style="left:36px;top:275.48px;font-size:7.28px;color:#2a2a2a">  "emailAddressFromAccount": "              @gmail.com"</div>
<div class="t mono" style="left:0;top:285.04px;width:25.5px;text-align:right;font-size:7.9px;color:#7d7d7d">66</div>
<div class="t mono" style="left:36px;top:285.04px;font-size:7.28px;color:#2a2a2a"> }</div>
<div class="a" style="left:122.29999999999995px;top:140.24px;width:61px;height:9px;background:#ee6c00"></div>
<div class="a" style="left:166px;top:274.08px;width:62px;height:9px;background:#ee6c00"></div>
</div>
<div class="a" style="left:1270px;top:166px;width:10px;height:286px;background:#f1f1f1;"></div>
<div class="a" style="left:1272px;top:240px;width:7px;height:55px;background:#c1c1c1;"></div>
<svg class="a" style="left:1273px;top:170px" width="5" height="4" viewBox="0 0 5 4"><path d="M0 4h5L2.5 0z" fill="#505050"/></svg>
<svg class="a" style="left:1273px;top:444px" width="5" height="4" viewBox="0 0 5 4"><path d="M0 0h5L2.5 4z" fill="#505050"/></svg>
<div class="a" style="left:691px;top:452px;width:589px;height:1px;background:#dadce0;"></div>
<div class="a" style="left:691px;top:453px;width:589px;height:20px;background:#f1f3f4;"></div>
<div class="a" style="left:694px;top:456.5px;width:482px;height:14px;background:#fff;border:1px solid #dadce0;border-right:none"></div>
<div class="t" style="left:697px;top:460.80px;font-size:7.8px;color:#202124;">@gmail.com</div>
<div class="t" style="left:1109.7px;top:460.80px;font-size:7.8px;color:#80868b;">3 matches</div>
<div class="a" style="left:1148.5px;top:456.5px;width:14px;height:14px;background:#fff;border:1px solid #dadce0"></div>
<div class="a" style="left:1162px;top:456.5px;width:14px;height:14px;background:#fff;border:1px solid #dadce0"></div>
<svg class="a" style="left:1152px;top:461px" width="7" height="5" viewBox="0 0 7 5" fill="none" stroke="#202124" stroke-width="1.4"><path d="M0.8 4.2L3.5 1.2 6.2 4.2"/></svg>
<svg class="a" style="left:1165.5px;top:461px" width="7" height="5" viewBox="0 0 7 5" fill="none" stroke="#202124" stroke-width="1.4"><path d="M0.8 0.8L3.5 3.8 6.2 0.8"/></svg>
<div class="t" style="left:1184.4px;top:460.80px;font-size:7.9px;color:#202124;">Aa</div>
<div class="t" style="left:1204.5px;top:459.80px;font-size:8px;color:#5f6368;font-weight:bold">.*</div>
<div class="a" style="left:1220.5px;top:456.5px;width:57px;height:14px;background:#fff;border:1px solid #dadce0;border-radius:2px"></div>
<div class="t" style="left:1237.5px;top:460.80px;font-size:7.4px;color:#1a73e8;">Cancel</div>
<div class="a" style="left:691px;top:473px;width:589px;height:18px;background:#dfe1e5;"></div>
<div class="t" style="left:696.3px;top:479.30px;font-size:7.7px;color:#5f6368;">25 characters selected</div>
<div class="a" style="left:408px;top:491px;width:872px;height:1px;background:#cbcdd1;"></div>
<div class="a" style="left:408px;top:492px;width:872px;height:17px;background:#f1f3f4;"></div>
<div class="a" style="left:408px;top:509px;width:872px;height:1px;background:#cbcdd1;"></div>
<svg class="a" style="left:417.5px;top:495px" width="3" height="11" viewBox="0 0 3 11" fill="#5f6368"><circle cx="1.5" cy="1.5" r="1.1"/><circle cx="1.5" cy="5.5" r="1.1"/><circle cx="1.5" cy="9.5" r="1.1"/></svg>
<div class="t" style="left:433px;top:497.80px;font-size:7.7px;color:#5f6368;">Console</div>
<div class="t" style="left:475px;top:497.80px;font-size:7.7px;color:#202124;">What's New</div>
<svg class="a" style="left:521.5px;top:498.5px" width="5" height="5" viewBox="0 0 5 5" stroke="#303134" stroke-width="1"><path d="M0.5 0.5L4.5 4.5M4.5 0.5L0.5 4.5"/></svg>
<div class="a" style="left:469px;top:507px;width:61px;height:2px;background:#1a73e8;"></div>
<svg class="a" style="left:1266.5px;top:496.5px" width="8" height="8" viewBox="0 0 8 8" stroke="#5f6368" stroke-width="1.1"><path d="M0.5 0.5L7.5 7.5M7.5 0.5L0.5 7.5"/></svg>
<div class="a" style="left:408px;top:510px;width:872px;height:17px;background:#f1f3f4;"></div>
<div class="a" style="left:408px;top:527px;width:872px;height:1px;background:#e0e0e0;"></div>
<div class="t" style="left:418.7px;top:515.30px;font-size:8.0px;color:#202124;">Highlights from the Chrome 105 update</div>
<div class="a" style="left:419.8px;top:537.3px;width:306px;height:30.700000000000045px;background:#fff;border:1px solid #dadce0"></div>
<div class="t" style="left:426.3px;top:542.10px;font-size:9.2px;color:#3a6fd8;">Step-by-step replay in the Recorder panel</div>
<div class="t" style="left:426.3px;top:554.60px;font-size:8.5px;color:#5f6368;">Set a breakpoint and replay a recording step by step in the Recorder panel.</div>
<div class="a" style="left:419.8px;top:571.3px;width:306px;height:31.200000000000045px;background:#fff;border:1px solid #dadce0"></div>
<div class="t" style="left:426.3px;top:576.10px;font-size:9.2px;color:#3a6fd8;">View Largest Contentful Paint (LCP) details</div>
<div class="t" style="left:426.3px;top:588.60px;font-size:8.5px;color:#5f6368;">View Largest Contentful Paint (LCP) details in the Performance insights panel.</div>
<div class="a" style="left:419.8px;top:605.3px;width:306px;height:34.700000000000045px;background:#fff;border:1px solid #dadce0"></div>
<div class="t" style="left:426.3px;top:610.10px;font-size:9.2px;color:#3a6fd8;">Top layer badge in the Elements panel</div>
<svg class="a" style="left:757.5px;top:541px" width="173.5" height="80" viewBox="0 0 173.5 80">
<defs><clipPath id="tc"><rect width="173.5" height="80"/></clipPath></defs>
<rect width="173.5" height="80" fill="#2a7af0"/>
<g clip-path="url(#tc)">
<g stroke="#4d8ff3" stroke-width="0.5" fill="none">
<path d="M0 12h174M0 39.5h174M0 67h174M0 25h174M0 54h174"/>
<path d="M22 0v80M43 0v80M64 0v80M86 0v80M108 0v80M130 0v80M152 0v80"/>
<path d="M3 0L83 80M83 0L3 80"/>
</g>
<g stroke="#a6c8fb" stroke-width="1.6" fill="none">
<circle cx="43" cy="39.5" r="28.5"/>
<circle cx="43" cy="39.5" r="21"/>
<path d="M43 11H99"/>
<circle cx="43" cy="39.5" r="65"/>
<path d="M0 24L18 52"/>
<path d="M51 80L67 55"/>
</g>
<rect x="67.5" y="56" width="35" height="20.5" rx="4.5" fill="#e31c1c"/>
<path d="M81 60.5L92 66.2 81 72z" fill="#fff"/>
<text x="119" y="74.5" font-family="Liberation Sans" font-size="21.8" fill="#eaf2fe">new</text>
</g>
</svg>
<div class="a" style="left:1270px;top:528px;width:10px;height:93px;background:#f1f1f1;"></div>
<div class="a" style="left:1272px;top:520.5px;width:7px;height:51px;background:#c1c1c1;"></div>
<svg class="a" style="left:1273px;top:514px" width="5" height="4" viewBox="0 0 5 4"><path d="M0 4h5L2.5 0z" fill="#a0a0a0"/></svg>
<svg class="a" style="left:1272.5px;top:616.5px" width="6" height="3" viewBox="0 0 6 3"><path d="M0 0h6L3 3z" fill="#303030"/></svg>
<svg class="a" style="left:986px;top:531px" width="9" height="13" viewBox="0 0 9 13"><path d="M0.5 0.5V10.2L2.8 8.1 4.6 11.8 6.1 11.1 4.4 7.5H7.6z" fill="#fff" stroke="#333" stroke-width="0.9"/></svg>


</body></html>
